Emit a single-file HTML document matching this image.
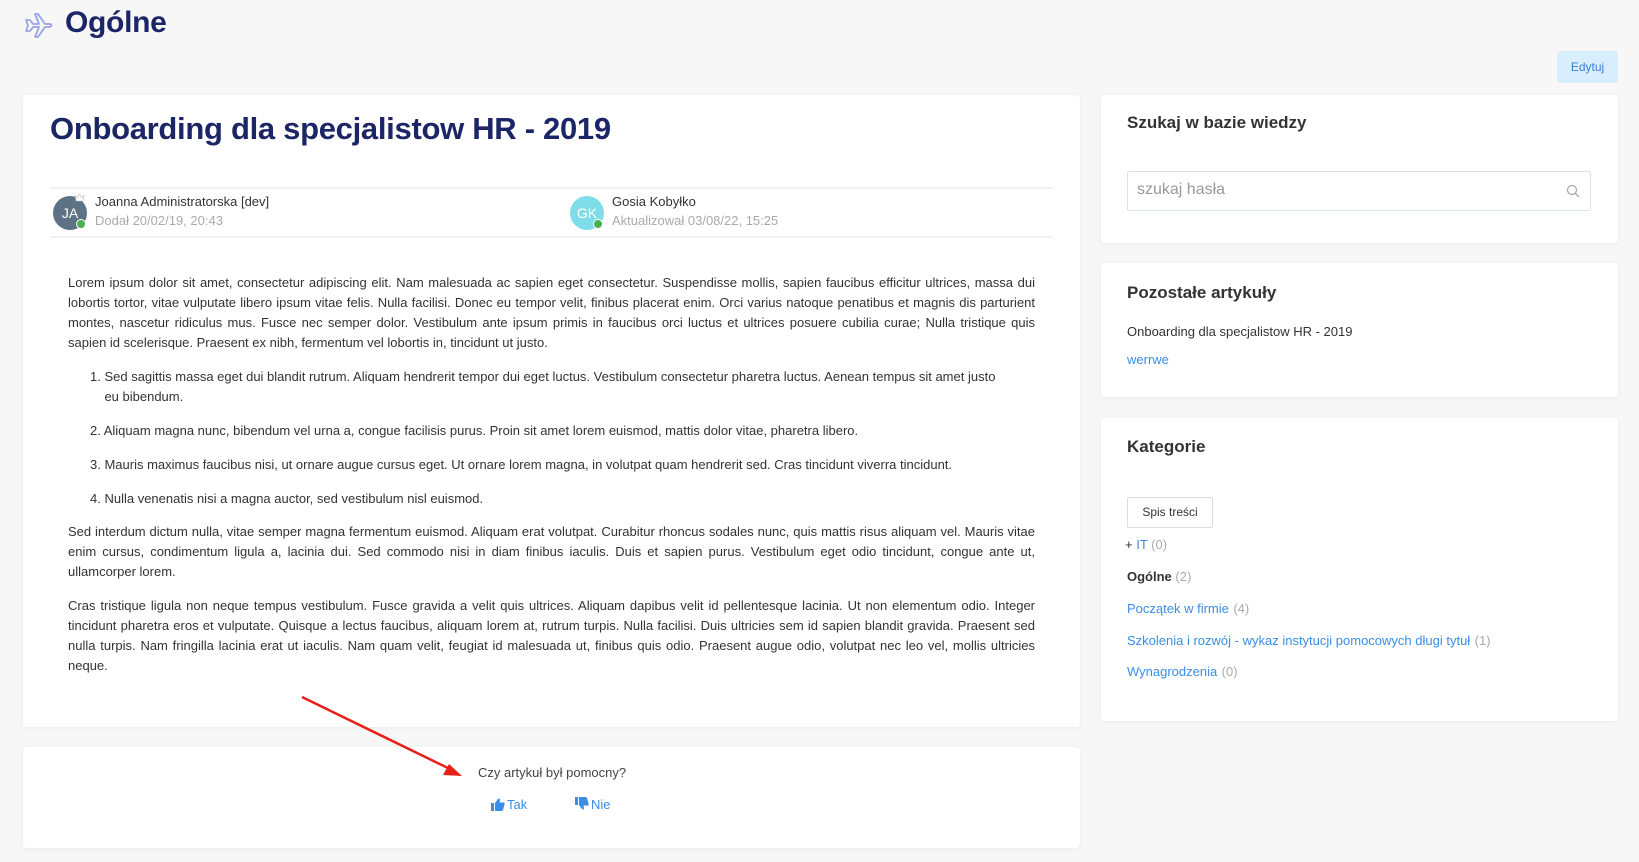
<!DOCTYPE html>
<html><head><meta charset="utf-8"><style>
*{box-sizing:border-box;margin:0;padding:0}
body{width:1639px;height:862px;background:#f7f7f7;font-family:"Liberation Sans",sans-serif;color:#333;position:relative;overflow:hidden}
.a{position:absolute;white-space:nowrap}
.card{position:absolute;background:#fff;border-radius:4px;box-shadow:0 1px 6px rgba(0,0,0,.05)}
.p{position:absolute;left:68px;width:967px;font-size:13px;line-height:20px;text-align:justify;color:#333}
.li{position:absolute;left:90px;width:945px;font-size:13px;line-height:20px;color:#333}
.h{font-size:17px;font-weight:bold;color:#333}
.lnk{color:#3a8ee6;font-size:13px}
.g{color:#aaa}
</style></head><body>
<svg class="a" style="left:22px;top:11px" width="32" height="28" viewBox="0 0 32 28"><path d="M4 9 L8 9 L11 13 L17 13 L13 3 L16 3 L23 13 L28 13 Q31 14 28 16 L23 16 L16 26 L13 26 L17 16 L11 16 L8 20 L4 20 L6 14.5 Z" fill="none" stroke="#9aa3e6" stroke-width="1.8" stroke-linejoin="round"/></svg>
<div class="a" style="left:65px;top:6px;font-size:30px;font-weight:bold;color:#1c2566;letter-spacing:-0.3px">Ogólne</div>
<div class="a" style="left:1557px;top:51px;width:61px;height:32px;background:#d8eefd;border-radius:3px;color:#3a7bd5;font-size:12px;text-align:center;line-height:32px">Edytuj</div>

<div class="card" style="left:23px;top:95px;width:1057px;height:632px"></div>
<div class="a" style="left:50px;top:111px;font-size:31px;font-weight:bold;color:#1c2566;letter-spacing:-0.3px">Onboarding dla specjalistow HR - 2019</div>
<div class="a" style="left:50px;top:187px;width:1003px;height:2px;background:#f2f2f2"></div>
<div class="a" style="left:50px;top:236px;width:1003px;height:2px;background:#f2f2f2"></div>
<div class="a" style="left:53px;top:196px;width:34px;height:34px;border-radius:50%;background:#5d7385;color:#fff;font-size:14px;text-align:center;line-height:34px">JA</div>
<div class="a" style="left:76px;top:219px;width:10px;height:10px;border-radius:50%;background:#4caf50;border:1px solid #fff"></div>
<svg class="a" style="left:74px;top:193px" width="11" height="9" viewBox="0 0 11 9"><path d="M1 2 L3 5 L5.5 1 L8 5 L10 2 L9 8 L2 8 Z" fill="#fff" stroke="#bbb" stroke-width="0.6"/></svg>
<div class="a" style="left:95px;top:194px;font-size:13px">Joanna Administratorska [dev]</div>
<div class="a g" style="left:95px;top:213px;font-size:13px">Dodał 20/02/19, 20:43</div>
<div class="a" style="left:570px;top:196px;width:34px;height:34px;border-radius:50%;background:#7fdde9;color:#fff;font-size:14px;text-align:center;line-height:34px">GK</div>
<div class="a" style="left:593px;top:219px;width:10px;height:10px;border-radius:50%;background:#4caf50;border:1px solid #fff"></div>
<div class="a" style="left:612px;top:194px;font-size:13px">Gosia Kobyłko</div>
<div class="a g" style="left:612px;top:213px;font-size:13px">Aktualizował 03/08/22, 15:25</div>

<div class="p" style="top:273px">Lorem ipsum dolor sit amet, consectetur adipiscing elit. Nam malesuada ac sapien eget consectetur. Suspendisse mollis, sapien faucibus efficitur ultrices, massa dui lobortis tortor, vitae vulputate libero ipsum vitae felis. Nulla facilisi. Donec eu tempor velit, finibus placerat enim. Orci varius natoque penatibus et magnis dis parturient montes, nascetur ridiculus mus. Fusce nec semper dolor. Vestibulum ante ipsum primis in faucibus orci luctus et ultrices posuere cubilia curae; Nulla tristique quis sapien id scelerisque. Praesent ex nibh, fermentum vel lobortis in, tincidunt ut justo.</div>
<div class="li" style="top:367px">1. Sed sagittis massa eget dui blandit rutrum. Aliquam hendrerit tempor dui eget luctus. Vestibulum consectetur pharetra luctus. Aenean tempus sit amet justo<br>&nbsp;&nbsp;&nbsp;&nbsp;eu bibendum.</div>
<div class="li" style="top:421px">2. Aliquam magna nunc, bibendum vel urna a, congue facilisis purus. Proin sit amet lorem euismod, mattis dolor vitae, pharetra libero.</div>
<div class="li" style="top:455px">3. Mauris maximus faucibus nisi, ut ornare augue cursus eget. Ut ornare lorem magna, in volutpat quam hendrerit sed. Cras tincidunt viverra tincidunt.</div>
<div class="li" style="top:489px">4. Nulla venenatis nisi a magna auctor, sed vestibulum nisl euismod.</div>
<div class="p" style="top:522px">Sed interdum dictum nulla, vitae semper magna fermentum euismod. Aliquam erat volutpat. Curabitur rhoncus sodales nunc, quis mattis risus aliquam vel. Mauris vitae enim cursus, condimentum ligula a, lacinia dui. Sed commodo nisi in diam finibus iaculis. Duis et sapien purus. Vestibulum eget odio tincidunt, congue ante ut, ullamcorper lorem.</div>
<div class="p" style="top:596px">Cras tristique ligula non neque tempus vestibulum. Fusce gravida a velit quis ultrices. Aliquam dapibus velit id pellentesque lacinia. Ut non elementum odio. Integer tincidunt pharetra eros et vulputate. Quisque a lectus faucibus, aliquam lorem at, rutrum turpis. Nulla facilisi. Duis ultricies sem id sapien blandit gravida. Praesent sed nulla turpis. Nam fringilla lacinia erat ut iaculis. Nam quam velit, feugiat id malesuada ut, finibus quis odio. Praesent augue odio, volutpat nec leo vel, mollis ultricies neque.</div>

<div class="card" style="left:23px;top:747px;width:1057px;height:101px"></div>
<div class="a" style="left:478px;top:765px;font-size:13px;color:#444">Czy artykuł był pomocny?</div>
<svg class="a" style="left:491px;top:798px" width="14" height="13" viewBox="0 0 14 13"><rect x="0" y="5" width="3" height="8" fill="#3a8ee6"/><path d="M4 5 L7 1 Q8 0 9 1 L8.5 4.5 L13 4.5 Q14 5 13.5 6.5 L12 12 Q11.5 13 10.5 13 L4 13 Z" fill="#3a8ee6"/></svg>
<div class="a lnk" style="left:507px;top:797px">Tak</div>
<svg class="a" style="left:575px;top:797px" width="14" height="13" viewBox="0 0 14 13"><g transform="translate(0,13) scale(1,-1)"><rect x="0" y="5" width="3" height="8" fill="#3a8ee6"/><path d="M4 5 L7 1 Q8 0 9 1 L8.5 4.5 L13 4.5 Q14 5 13.5 6.5 L12 12 Q11.5 13 10.5 13 L4 13 Z" fill="#3a8ee6"/></g></svg>
<div class="a lnk" style="left:591px;top:797px">Nie</div>
<svg class="a" style="left:0;top:0" width="1639" height="862"><line x1="302" y1="697" x2="452" y2="770" stroke="#e8201a" stroke-width="2.5"/><polygon points="462,776 443,775 449,764" fill="#e8201a"/></svg>

<div class="card" style="left:1101px;top:95px;width:517px;height:148px"></div>
<div class="a h" style="left:1127px;top:113px">Szukaj w bazie wiedzy</div>
<div class="a" style="left:1127px;top:171px;width:464px;height:40px;border:1px solid #dde1ea;border-radius:2px"></div>
<div class="a" style="left:1137px;top:181px;font-size:16px;color:#999">szukaj hasła</div>
<svg class="a" style="left:1566px;top:184px" width="14" height="14" viewBox="0 0 14 14"><circle cx="6" cy="6" r="4.5" fill="none" stroke="#aaa" stroke-width="1.3"/><line x1="9.3" y1="9.3" x2="13" y2="13" stroke="#aaa" stroke-width="1.3"/></svg>

<div class="card" style="left:1101px;top:263px;width:517px;height:134px"></div>
<div class="a h" style="left:1127px;top:283px">Pozostałe artykuły</div>
<div class="a" style="left:1127px;top:324px;font-size:13px">Onboarding dla specjalistow HR - 2019</div>
<div class="a lnk" style="left:1127px;top:352px">werrwe</div>

<div class="card" style="left:1101px;top:418px;width:517px;height:303px"></div>
<div class="a h" style="left:1127px;top:437px">Kategorie</div>
<div class="a" style="left:1127px;top:497px;width:86px;height:31px;border:1px solid #ddd;border-radius:2px;font-size:12px;text-align:center;line-height:29px">Spis treści</div>
<div class="a" style="left:1125px;top:537px;font-size:13px">+ <span class="lnk">IT</span> <span class="g">(0)</span></div>
<div class="a" style="left:1127px;top:569px;font-size:13px"><b>Ogólne</b> <span class="g">(2)</span></div>
<div class="a" style="left:1127px;top:600px"><span class="lnk">Początek w firmie</span> <span class="g" style="font-size:13px">(4)</span></div>
<div class="a" style="left:1127px;top:632px"><span class="lnk">Szkolenia i rozwój - wykaz instytucji pomocowych długi tytuł</span> <span class="g" style="font-size:13px">(1)</span></div>
<div class="a" style="left:1127px;top:663px"><span class="lnk">Wynagrodzenia</span> <span class="g" style="font-size:13px">(0)</span></div>
</body></html>
